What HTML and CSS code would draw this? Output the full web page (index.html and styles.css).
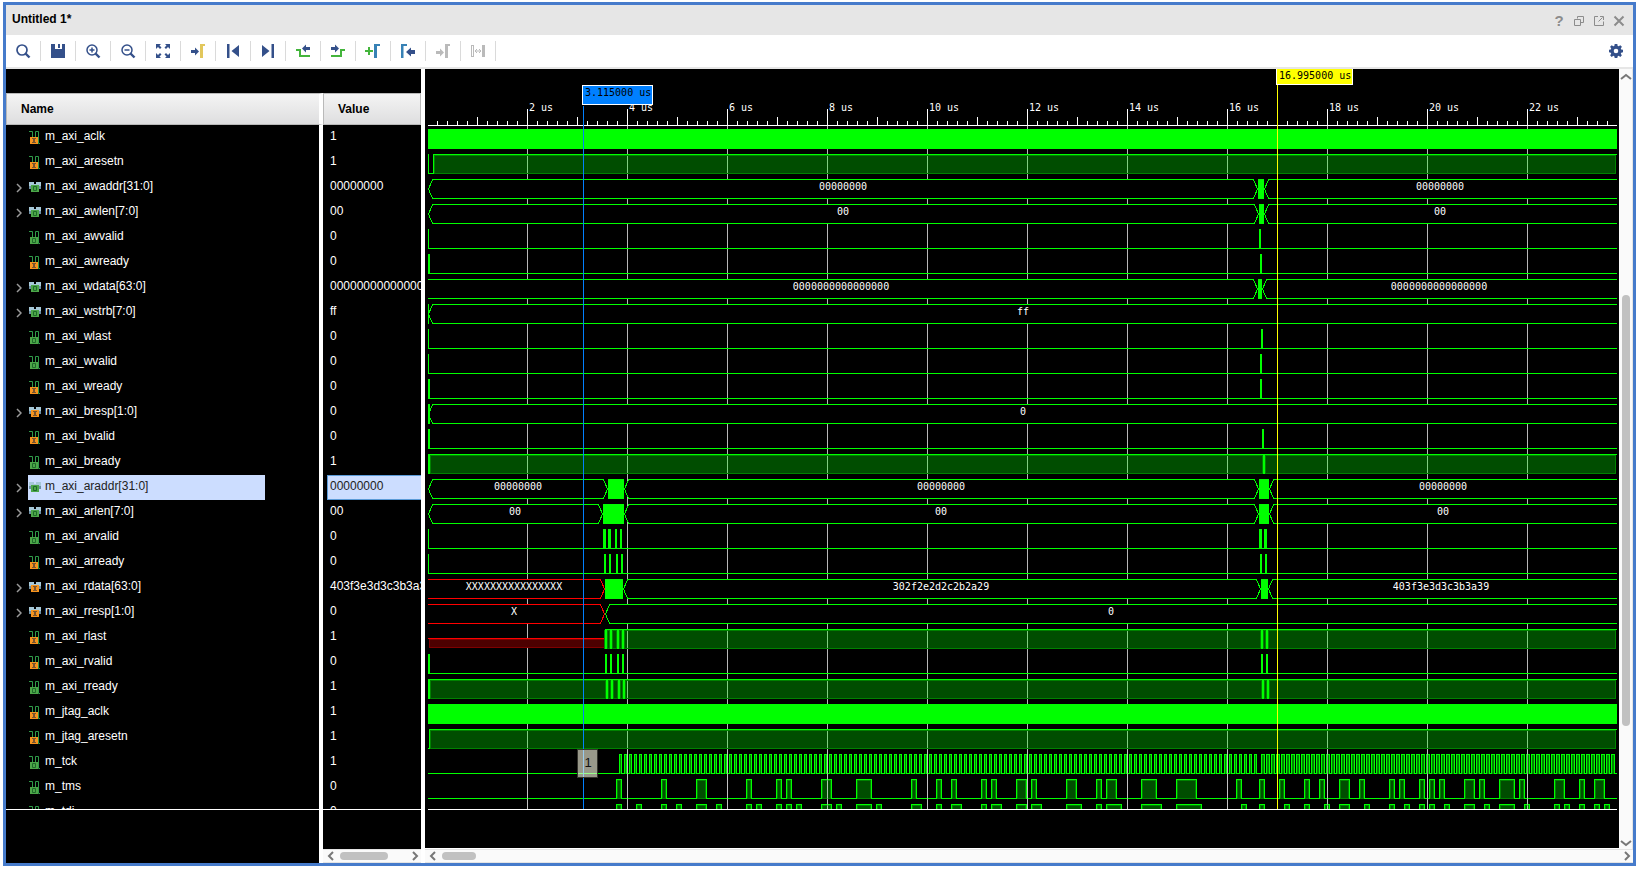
FILE: index.html
```html
<!DOCTYPE html>
<html lang="en">
<head>
<meta charset="utf-8">
<title>Untitled 1*</title>
<link rel="stylesheet" href="styles.css">
</head>
<body>
<main class="window">
  <header class="titlebar">
    <h1 class="title">Untitled 1*</h1>
    <div class="window-actions">
      <button type="button" class="win-btn help" aria-label="Help">?</button>
      <button type="button" class="win-btn" aria-label="Restore"><svg width="12" height="12" viewBox="0 0 12 12" fill="none" stroke="#8c8c8c"><path d="M4.500 3.500v-2h6v6h-3M1.500 4.500h6v6h-6z"/></svg></button>
      <button type="button" class="win-btn" aria-label="Float"><svg width="12" height="12" viewBox="0 0 12 12" fill="none" stroke="#8c8c8c"><path d="M5 1.500H1.500v9h9V6.500M5.500 6.500l4-4M7 1.500h3.500V5"/></svg></button>
      <button type="button" class="win-btn" aria-label="Close"><svg width="12" height="12" viewBox="0 0 12 12" fill="none" stroke="#8c8c8c" stroke-width="2"><path d="M1.500 1.500l9 9M10.500 1.500l-9 9"/></svg></button>
    </div>
  </header>

  <nav class="toolbar" aria-label="Waveform tools">
    <button type="button" class="tool" aria-label="Search"><svg width="16" height="16" viewBox="0 0 16 16" fill="none" stroke="#34508a"><circle cx="7" cy="7" r="5" stroke-width="1.700"/><path d="M10.500 10.500l4 4" stroke-width="2.400"/></svg></button>
    <button type="button" class="tool" aria-label="Save"><svg width="16" height="16" viewBox="0 0 16 16"><path d="M1 1h3v5h8V1h3v14H1z" fill="#34508a"/><path d="M8 1h2v4H8zM4 1h1v5H4z" fill="#34508a"/></svg></button>
    <button type="button" class="tool" aria-label="Zoom in"><svg width="16" height="16" viewBox="0 0 16 16" fill="none" stroke="#34508a"><circle cx="7" cy="7" r="5" stroke-width="1.500"/><path d="M4.500 7h5M7 4.500v5" stroke-width="1.500"/><path d="M10.500 10.500l4 4" stroke-width="2.400"/></svg></button>
    <button type="button" class="tool" aria-label="Zoom out"><svg width="16" height="16" viewBox="0 0 16 16" fill="none" stroke="#34508a"><circle cx="7" cy="7" r="5" stroke-width="1.500"/><path d="M4.500 7h5" stroke-width="1.500"/><path d="M10.500 10.500l4 4" stroke-width="2.400"/></svg></button>
    <button type="button" class="tool" aria-label="Zoom fit"><svg width="16" height="16" viewBox="0 0 16 16"><path d="M1 1h5L4.500 2.500l2 2-1.500 1.500-2-2L1 6zM15 1v5l-2-2-2 2-1.500-1.500 2-2L10 1zM1 15v-5l2 2 2-2 1.500 1.500-2 2L6 15zM15 15h-5l1.500-1.500-2-2L11 10l2 2 2-2z" fill="#34508a"/></svg></button>
    <button type="button" class="tool" aria-label="Go to cursor"><svg width="16" height="16" viewBox="0 0 16 16"><path d="M1 7h4V4.500L9 8.500l-4 4V10H1z" fill="#34508a"/><path d="M10 15V1h5v2h-2v12z" fill="#e2c75c"/></svg></button>
    <button type="button" class="tool" aria-label="Go to start"><svg width="16" height="16" viewBox="0 0 16 16"><path d="M2 1h2.500v14H2zM14 2v12L6.500 8z" fill="#34508a"/></svg></button>
    <button type="button" class="tool" aria-label="Go to end"><svg width="16" height="16" viewBox="0 0 16 16"><path d="M14 1h-2.500v14H14zM2 2v12l7.500-6z" fill="#34508a"/></svg></button>
    <button type="button" class="tool" aria-label="Previous transition"><svg width="16" height="16" viewBox="0 0 16 16"><path d="M1 6h5v6h9v2H4V8H1z" fill="#44b53c"/><path d="M15 4h-4V1.500L7 5.500l4 4V7h4z" fill="#34508a"/></svg></button>
    <button type="button" class="tool" aria-label="Next transition"><svg width="16" height="16" viewBox="0 0 16 16"><path d="M15 6h-5v6H1v2h11V8h3z" fill="#44b53c"/><path d="M1 4h4V1.500l4 4-4 4V7H1z" fill="#34508a"/></svg></button>
    <button type="button" class="tool" aria-label="Add marker"><svg width="16" height="16" viewBox="0 0 16 16"><path d="M0 7h3V4h2v3h3v2H5v3H3V9H0z" fill="#44b53c"/><path d="M9 15V1h6v2h-3v12z" fill="#3781b5"/></svg></button>
    <button type="button" class="tool" aria-label="Previous marker"><svg width="16" height="16" viewBox="0 0 16 16"><path d="M1 15V1h6v2H3.500v12z" fill="#3781b5"/><path d="M15 7h-4V4.500L6 9l5 4.500V11h4z" fill="#34508a"/></svg></button>
    <button type="button" class="tool" aria-label="Next marker" disabled><svg width="16" height="16" viewBox="0 0 16 16" fill="#bababa"><path d="M1 8h4V5.500l4 4-4 4V11H1zM10 15V1h5v2h-2v12z"/></svg></button>
    <button type="button" class="tool" aria-label="Swap cursors" disabled><svg width="16" height="16" viewBox="0 0 16 16" fill="none" stroke="#bababa"><path d="M1.500 2v12M3.500 2v12M1.500 2.500h2M1.500 13.500h2M5 8h6M7 6L5 8l2 2M9 6l2 2-2 2"/><path d="M13.500 2v12" stroke-width="3"/></svg></button>
    <button type="button" class="settings" aria-label="Settings"><svg width="14" height="14" viewBox="0 0 14 14"><path fill="#34508a" fill-rule="evenodd" d="M5.700 0h2.600l.4 1.900 1 .4L11.300 1.200l1.600 1.600-1.100 1.600.4 1 1.800.4v2.500l-1.800.4-.4 1 1.100 1.600-1.600 1.600-1.600-1.100-1 .4-.4 1.800H5.700l-.4-1.800-1-.4-1.600 1.100-1.600-1.600 1.100-1.600-.4-1L0 8.300V5.800l1.800-.4.4-1L1.100 2.800l1.600-1.600 1.600 1.100 1-.4zM7 4.700a2.300 2.300 0 1 0 0 4.600 2.300 2.300 0 0 0 0-4.600z"/></svg></button>
  </nav>

  <section class="viewer">
    <div class="signals">
      <div class="list-area">
        <table class="signal-table">
          <colgroup><col class="col-name"><col class="col-value"></colgroup>
          <thead><tr><th scope="col">Name</th><th scope="col">Value</th></tr></thead>
          <tbody id="signal-rows"></tbody>
        </table>
      </div>
      <div class="list-foot">
        <div class="foot-name"></div>
        <div class="foot-value">
          <div class="foot-fill"></div>
          <div class="hbar"><svg class="arrow" width="8" height="10" viewBox="0 0 8 10"><path d="M6 1L2 5l4 4"/></svg><span class="thumb thumb-value"></span><svg class="arrow" width="8" height="10" viewBox="0 0 8 10"><path d="M2 1l4 4-4 4"/></svg></div>
        </div>
      </div>
    </div>
    <div class="wave">
      <div class="wave-top">
        <div class="wave-black">
          <div class="plot"><svg id="plot" width="100%" height="100%" role="img" aria-label="Signal waveforms"></svg></div>
        </div>
        <div class="vbar"><svg class="arrow" width="12" height="8" viewBox="0 0 12 8"><path d="M1 6l5-4 5 4"/></svg><div class="vtrack"><span class="vthumb"></span></div><svg class="arrow" width="12" height="8" viewBox="0 0 12 8"><path d="M1 2l5 4 5-4"/></svg></div>
      </div>
      <div class="hbar"><svg class="arrow" width="8" height="10" viewBox="0 0 8 10"><path d="M6 1L2 5l4 4"/></svg><span class="thumb thumb-wave"></span><svg class="arrow" width="8" height="10" viewBox="0 0 8 10"><path d="M2 1l4 4-4 4"/></svg></div>
    </div>
  </section>
</main>
<script src="wave.js"></script>
</body>
</html>
```
FILE: styles.css
```css
* { box-sizing: border-box; }
body {
  margin: 0;
  padding: 2px 3px 4px;
  height: 100vh;
  background: #fff;
  font: 12px/15px "Liberation Sans", Arial, sans-serif;
  color: #000;
}
button { border: 0; padding: 0; margin: 0; background: none; font: inherit; color: inherit; }
svg { display: block; }

.window {
  height: 100%;
  display: flex;
  flex-direction: column;
  border: 3px solid #467bcb;
  background: #fff;
}
.titlebar {
  flex: none;
  height: 30px;
  display: flex;
  justify-content: space-between;
  padding: 0 8px 0 6px;
  background: #e6e6e6;
}
.title { margin: 0; padding-top: 7px; font-size: 12px; line-height: 15px; }
.window-actions { display: flex; gap: 8px; padding-top: 10px; }
.win-btn { width: 12px; height: 12px; }
.help { color: #8c8c8c; font-weight: bold; font-size: 15px; line-height: 12px; }

.toolbar {
  flex: none;
  height: 34px;
  display: flex;
  align-items: center;
  background: #fff;
  border-bottom: 2px solid #e6e6e6;
}
.tool {
  width: 35px;
  height: 20px;
  padding-left: 9px;
  border-right: 1px solid #dadada;
}
.settings { margin-left: auto; margin-right: 10px; }

.viewer { flex: 1; min-height: 0; display: flex; }
.signals {
  flex: none;
  width: 415px;
  display: flex;
  flex-direction: column;
  background: #000;
}
.list-area { flex: 1; min-height: 0; overflow: hidden; padding-top: 24px; }
.signal-table { width: 100%; border-collapse: separate; border-spacing: 0; table-layout: fixed; color: #fff; }
.col-name { width: 317px; }
.signal-table th {
  height: 32px;
  padding: 0 14px;
  text-align: left;
  color: #000;
  border: 1px solid #b9b9b9;
  background: linear-gradient(#f4f4f4, #dededf);
}
.signal-table th:first-child, .signal-table td:first-child {
  border-right: 4px solid #fff;
  background-clip: padding-box;
}
.signal-table td { height: 25px; padding: 0; }
.signal { display: flex; height: 25px; }
.twist { flex: none; width: 22px; padding-left: 10px; display: flex; align-items: center; }
.label { display: flex; align-items: flex-start; width: 237px; height: 25px; padding: 4px 0 0 1px; gap: 4px; }
.label svg { flex: none; margin-top: 2px; }
.value {
  height: 25px;
  margin-left: 4px;
  padding: 4px 0 0 3px;
  overflow: hidden;
  white-space: nowrap;
}
.selected .label { background: #ccddff; color: #222; }
.selected .value { background: #ccddff; color: #222; border: 1px solid #5b9bd8; border-right: 0; padding: 3px 0 0 2px; }

.list-foot { flex: none; height: 54px; display: flex; border-top: 1px solid #fff; }
.foot-name { width: 317px; border-right: 4px solid #fff; }
.foot-value { flex: 1; display: flex; flex-direction: column; }
.foot-fill { flex: 1; }

.wave { flex: 1; min-width: 0; display: flex; flex-direction: column; border-left: 4px solid #fff; }
.wave-top { flex: 1; min-height: 0; display: flex; }
.wave-black { flex: 1; min-width: 0; background: #000; padding: 0 2px 38px 3px; border-bottom: 1px solid #fff; }
.plot { height: 100%; overflow: hidden; border-bottom: 1px solid #fff; }

.hbar {
  flex: none;
  height: 14px;
  display: flex;
  align-items: center;
  padding: 0 2px 0 4px;
  background: #fafafa;
  border-top: 1px solid #e4e4e4;
  border-bottom: 1px solid #e4e4e4;
}
.hbar .arrow:last-child { margin-left: auto; }
.thumb { height: 8px; border-radius: 4px; background: #c1c1c1; }
.thumb-value { width: 48px; margin-left: 5px; }
.thumb-wave { width: 34px; margin-left: 5px; }
.vbar {
  flex: none;
  width: 14px;
  display: flex;
  flex-direction: column;
  align-items: center;
  padding: 4px 0 2px;
  background: #fafafa;
  border-right: 1px solid #e4e4e4;
}
.vtrack { flex: 1; width: 8px; display: flex; flex-direction: column; }
.vtrack::before { content: ""; flex: 213; }
.vtrack::after { content: ""; flex: 113; }
.vthumb { flex: 430; border-radius: 4px; background: #c1c1c1; }
.arrow { flex: none; fill: none; stroke: #777; stroke-width: 2; }

#plot text { font: 10px "DejaVu Sans Mono", "Liberation Mono", monospace; fill: #fff; }
#plot text.dark { fill: #000; }
#plot text.tip { font: 13px "Liberation Sans", Arial, sans-serif; fill: #111; }
```
FILE: wave.js
```js
const ORIGIN = 428;      // canvas column of the first visible sample
const RULER_Y = 56;
const ROW_TOP = 60;
const ROW_STEP = 25;
const END = Infinity;

// name, value, port direction (i/o), waveform description
const SIGNALS = [
  ['m_axi_aclk', '1', 'i', { clock: true }],
  ['m_axi_aresetn', '1', 'i', { edge: 1, high: [[433, END]] }],
  ['m_axi_awaddr[31:0]', '00000000', 'o', { bus: [[428, 1258, '00000000', 843], [1264, END, '00000000', 1440]], busy: [[1258, 6]] }],
  ['m_axi_awlen[7:0]', '00', 'o', { bus: [[428, 1259, '00', 843], [1264, END, '00', 1440]], busy: [[1259, 5]] }],
  ['m_axi_awvalid', '0', 'o', { edge: 1, spikes: [[1259, 2]] }],
  ['m_axi_awready', '0', 'i', { edge: 2, spikes: [[1260, 2]] }],
  ['m_axi_wdata[63:0]', '0000000000000000', 'o', { bus: [[420, 1258, '0000000000000000', 841], [1262, END, '0000000000000000', 1439]], busy: [[1258, 4]] }],
  ['m_axi_wstrb[7:0]', 'ff', 'o', { edge: 1, bus: [[428, END, 'ff', 1023]] }],
  ['m_axi_wlast', '0', 'o', { edge: 1, spikes: [[1261, 2]] }],
  ['m_axi_wvalid', '0', 'o', { edge: 1, spikes: [[1260, 2]] }],
  ['m_axi_wready', '0', 'i', { edge: 2, spikes: [[1260, 2]] }],
  ['m_axi_bresp[1:0]', '0', 'i', { edge: 2, bus: [[428, END, '0', 1023]] }],
  ['m_axi_bvalid', '0', 'i', { edge: 2, spikes: [[1262, 2]] }],
  ['m_axi_bready', '1', 'o', { edge: 2, high: [[429, END]], spikes: [[1263, 2]] }],
  ['m_axi_araddr[31:0]', '00000000', 'o', { bus: [[428, 608, '00000000', 518], [624, 1259, '00000000', 941], [1269, END, '00000000', 1443]], busy: [[608, 16], [1259, 10]] }],
  ['m_axi_arlen[7:0]', '00', 'o', { bus: [[428, 603, '00', 515], [624, 1259, '00', 941], [1269, END, '00', 1443]], busy: [[603, 21], [1259, 10]] }],
  ['m_axi_arvalid', '0', 'o', { edge: 1, spikes: [[603, 3], [608, 3], [615, 2], [620, 2], [1259, 3], [1264, 3]] }],
  ['m_axi_arready', '0', 'i', { edge: 1, spikes: [[604, 2], [609, 2], [616, 2], [621, 2], [1260, 2], [1265, 2]] }],
  ['m_axi_rdata[63:0]', '403f3e3d3c3b3a39', 'i', { bus: [[420, 605, 'XXXXXXXXXXXXXXXX', 514, 'x'], [623, 1261, '302f2e2d2c2b2a29', 941], [1268, END, '403f3e3d3c3b3a39', 1441]], busy: [[605, 18], [1261, 7]] }],
  ['m_axi_rresp[1:0]', '0', 'i', { bus: [[420, 605, 'X', 514, 'x'], [605, END, '0', 1111]] }],
  ['m_axi_rlast', '1', 'i', { unknown: [428, 605], high: [[605, END]], spikes: [[605, 2], [610, 2], [617, 2], [622, 2], [1261, 2], [1266, 2]] }],
  ['m_axi_rvalid', '0', 'i', { edge: 2, spikes: [[605, 2], [610, 2], [617, 2], [622, 2], [1261, 2], [1266, 2]] }],
  ['m_axi_rready', '1', 'o', { edge: 2, high: [[429, END]], spikes: [[606, 2], [611, 2], [618, 2], [623, 2], [1262, 2], [1267, 2]] }],
  ['m_jtag_aclk', '1', 'i', { clock: true }],
  ['m_jtag_aresetn', '1', 'i', { high: [[429, END]] }],
  ['m_tck', '1', 'o', { ticks: [[619, 1256, 3], [1261, 1614, 4]] }],
  ['m_tms', '0', 'o', { high: [[616, 622], [661, 667], [696, 707], [746, 752], [776, 782], [786, 792], [821, 832], [856, 872], [911, 917], [936, 942], [951, 957], [981, 987], [991, 997], [1016, 1027], [1031, 1037], [1066, 1077], [1096, 1102], [1106, 1117], [1141, 1157], [1176, 1197], [1236, 1242], [1259, 1265], [1279, 1285], [1304, 1310], [1319, 1325], [1339, 1350], [1359, 1365], [1389, 1395], [1399, 1405], [1419, 1425], [1429, 1435], [1439, 1445], [1464, 1475], [1479, 1485], [1499, 1515], [1519, 1525], [1554, 1565], [1579, 1585], [1594, 1605]] }],
  ['m_tdi', '0', 'o', { high: [[616, 622], [636, 642], [661, 667], [676, 682], [696, 707], [716, 722], [746, 752], [756, 762], [776, 782], [786, 792], [796, 802], [821, 832], [836, 842], [856, 872], [876, 882], [911, 922], [936, 942], [951, 962], [981, 987], [991, 1002], [1016, 1027], [1031, 1042], [1066, 1082], [1096, 1102], [1106, 1122], [1141, 1162], [1176, 1202], [1241, 1247], [1259, 1265], [1284, 1290], [1304, 1310], [1324, 1330], [1339, 1350], [1364, 1370], [1389, 1395], [1404, 1410], [1419, 1425], [1429, 1435], [1444, 1450], [1464, 1475], [1484, 1490], [1499, 1515], [1524, 1530], [1554, 1560], [1564, 1570], [1579, 1585], [1594, 1600], [1604, 1610]] }],
];
const SELECTED = 14;

/* ---------- signal table ---------- */
function signalIcon(dir, isBus) {
  const color = dir === 'i' ? '#f7941d' : '#4da649';
  const x = isBus ? 2 : 1;
  const y = isBus ? 4 : 6;
  const badge = `<path d="M${x} ${y}h8v7h-8z" fill="${color}"/>` + (dir === 'i'
    ? `<path d="M${x + 2} ${y + 1}h4v1h-1v3h1v1h-4v-1h1v-3h-1z" fill="#7a5630"/>`
    : `<path d="M${x + 2.5} ${y + 1.5}h3v4h-3z" fill="none" stroke="#1d6b2a"/>`);
  const base = isBus
    ? '<path d="M0 1h5v2h2V1h5v7H0z" fill="#a6c8d8"/><path d="M0 5h2v3H0zM10 5h2v3h-2z" fill="#6c8ea4"/>'
    : '<path d="M0 .5h3.500V11M6.500 10V.5h3V12.500H11" fill="none" stroke="#2f9a48"/>';
  return `<svg width="12" height="13" viewBox="0 0 12 13" aria-hidden="true">${base}${badge}</svg>`;
}
document.getElementById('signal-rows').innerHTML = SIGNALS.map(([name, value, dir], i) => {
  const isBus = name.endsWith(']');
  const twist = isBus
    ? `<button type="button" class="twist" aria-label="Expand ${name}"><svg width="6" height="10" viewBox="0 0 6 10" fill="none" stroke="#999" stroke-width="1.500"><path d="M1 1l4 4-4 4"/></svg></button>`
    : '<span class="twist"></span>';
  return `<tr${i === SELECTED ? ' class="selected"' : ''}><td><div class="signal">${twist}<span class="label">${signalIcon(dir, isBus)}<span>${name}</span></span></div></td><td><div class="value">${value}</div></td></tr>`;
}).join('');

/* ---------- waveforms ---------- */
const plot = document.getElementById('plot');
const GREEN = '#00ff00', DIM = '#008200', RED = '#ff0000', DIM_RED = '#800000';

function render() {
  const width = plot.clientWidth, height = plot.clientHeight;
  const out = [];
  const rect = (x, y, w, h, fill) => { if (w > 0) out.push(`<rect x="${x}" y="${y}" width="${w}" height="${h}" fill="${fill}"/>`); };
  const text = (x, y, str, extra = '') => out.push(`<text x="${x}" y="${y}" ${extra}>${str}</text>`);
  const px = v => (v === END ? width : v - ORIGIN);

  for (let x = 99; x < width; x += 100) rect(x, RULER_Y, 1, height, '#b8b8b8');

  function drawHigh(x0, x1, y, open) {
    const w = x1 - x0;
    rect(x0 + 1, y + 1, w - 2, 19, 'rgba(0,255,0,.3)');
    rect(x0 + 1, y + 1, w - 2, 1, DIM);
    rect(x0 + 1, y + 19, w - 2, 1, DIM);
    rect(x0 + 1, y + 1, 1, 19, DIM);
    rect(x1 - 2, y + 1, 1, 19, DIM);
    rect(x0, y, w, 1, GREEN);
    rect(x0, y, 1, 20, GREEN);
    if (!open) rect(x1 - 1, y, 1, 20, GREEN);
  }

  function drawBus(x0, x1, y, color, openRight) {
    const l = x0 + .5, r = openRight ? x1 + 10 : x1 - .5;
    out.push(`<path d="M${l} ${y + 10}L${l + 4} ${y + .5}H${r - 4}L${r} ${y + 10}L${r - 4} ${y + 19.5}H${l + 4}z" fill="#000" stroke="${color}"/>`);
  }

  SIGNALS.forEach(([, , , w], i) => {
    const y = ROW_TOP + i * ROW_STEP;
    if (w.clock) { rect(0, y, width, 20, GREEN); return; }
    if (w.bus) {
      w.bus.forEach(([a, b, label, center, kind]) => {
        drawBus(px(a), px(b), y, kind ? RED : GREEN, b === END);
        text(center - ORIGIN, y + 11, label, 'text-anchor="middle"');
      });
      (w.busy || []).forEach(([a, n]) => rect(px(a), y, n, 20, GREEN));
      if (w.edge) rect(0, y, w.edge, 20, GREEN);
      return;
    }
    let cursor = w.unknown ? px(w.unknown[1]) : 0;
    if (w.unknown) {
      const a = px(w.unknown[0]), n = cursor - a;
      rect(a + 1, y + 10, n - 1, 9, DIM_RED);
      rect(a + 2, y + 11, n - 3, 7, '#4c0000');
      rect(a, y + 9, n, 1, RED);
    }
    const high = w.high || [];
    const ticks = (w.ticks || []).flatMap(([a, b, n]) => {
      const list = [];
      for (let x = a; x < b; x += 5) list.push([x, x + n]);
      return list;
    });
    high.concat(ticks).forEach(([a, b]) => {
      rect(cursor, y + 19, px(a) - cursor, 1, GREEN);
      drawHigh(px(a), px(b), y, b === END);
      cursor = px(b);
    });
    rect(cursor, y + 19, width - cursor, 1, GREEN);
    (w.spikes || []).forEach(([a, n]) => {
      if (high.length) rect(px(a) - 1, y + 1, n + 2, 19, DIM);
      rect(px(a), y, n, 20, GREEN);
    });
    if (w.edge) rect(0, y, w.edge, 20, GREEN);
  });

  // gridlines stay visible over the dense clock pulses
  for (let x = 99; x < width; x += 100) rect(x, ROW_TOP + 25 * ROW_STEP - 5, 1, height, 'rgba(200,200,200,.6)');

  // time ruler
  rect(0, RULER_Y, width, 1, '#fff');
  for (let k = 0, x = 9; x < width; k++, x += 10) {
    const major = k % 10 === 9, mid = k % 10 === 4;
    const h = major ? 16 : mid ? 8 : 4;
    rect(x, RULER_Y - h, 1, h, '#fff');
    if (major) text(x + 2, 42, `${(k + 1) / 5} us`);
  }

  // cursor and marker
  rect(155, 37, 1, height, '#0080ff');
  out.push('<rect x="154.500" y="16.500" width="70" height="19" fill="#0080ff" stroke="#fff"/>');
  text(157, 27, '3.115000 us', 'class="dark"');
  rect(849, 16, 1, height, '#ffff00');
  out.push('<rect x="848.500" y="-.5" width="76" height="16" fill="#ffff00" stroke="#fff"/>');
  text(851, 10, '16.995000 us', 'class="dark"');

  // value tip at the cursor
  out.push('<rect x="149.500" y="680.500" width="20" height="28" fill="rgba(255,255,230,.6)" stroke="#33332c"/>');
  text(160, 698, '1', 'class="tip" text-anchor="middle"');

  plot.innerHTML = `<g shape-rendering="crispEdges">${out.join('')}</g>`;
}
render();
window.addEventListener('resize', render);
```
